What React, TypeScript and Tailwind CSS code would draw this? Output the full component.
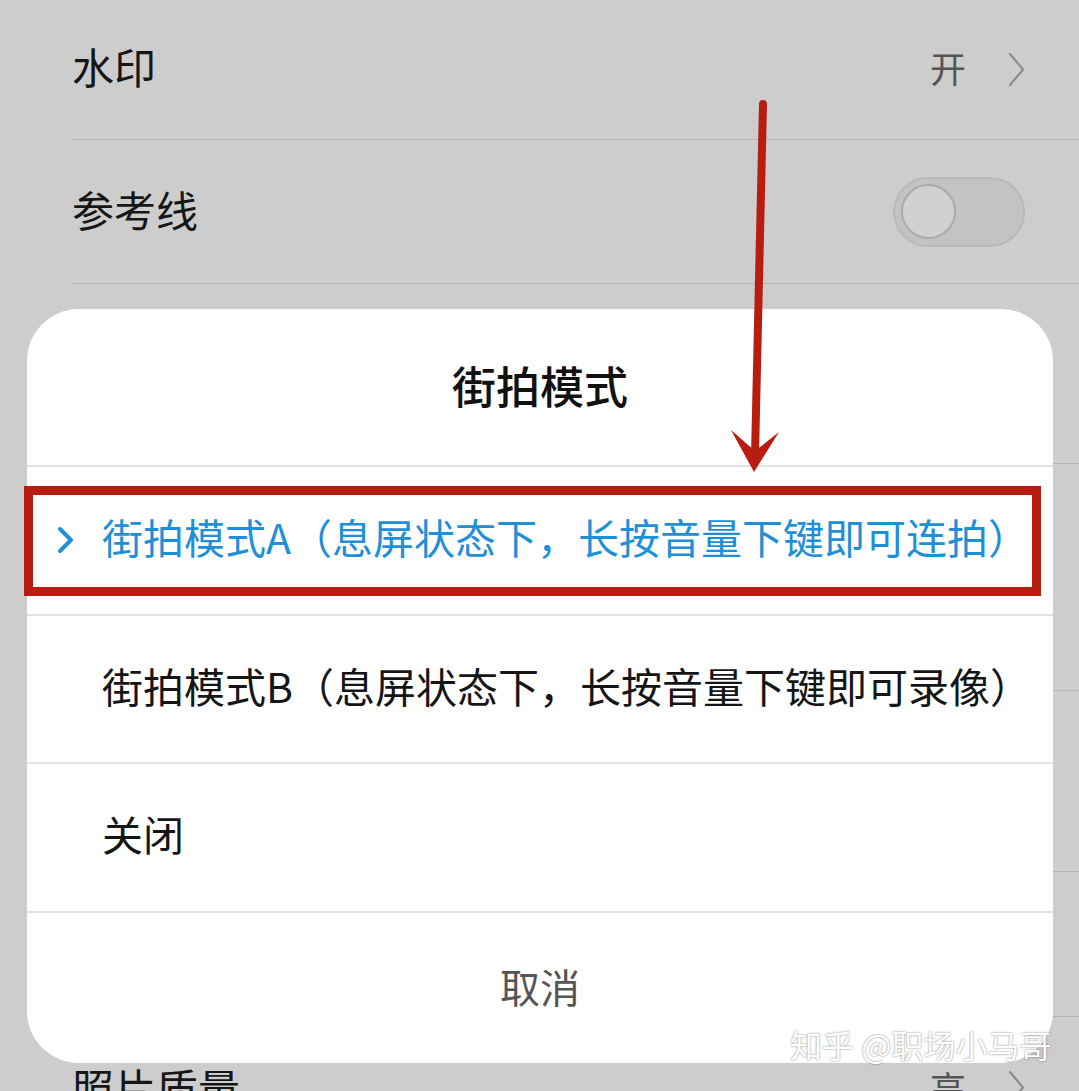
import { ReactNode } from "react";

const font = "font-['Noto_Sans_CJK_SC','Noto_Sans',sans-serif]";

function Chevron({ className = "" }: { className?: string }) {
  return (
    <svg width="17" height="33" viewBox="0 0 17 33" className={className}>
      <polyline
        points="2,1 15,16.5 2,32"
        fill="none"
        stroke="#8c8c8c"
        strokeWidth="2.2"
        strokeLinecap="round"
        strokeLinejoin="round"
      />
    </svg>
  );
}

function BgRow({ h, children }: { h: string; children?: ReactNode }) {
  return (
    <div
      className={`ml-[72px] ${h} border-b border-[#b6b6b6] flex items-center justify-between pr-[54px]`}
    >
      {children}
    </div>
  );
}

function Toggle() {
  return (
    <div className="w-[132px] h-[70px] rounded-full bg-[#c3c3c3] border-2 border-[#b9b9b9] flex items-center pl-[6px]">
      <div className="w-[55px] h-[55px] rounded-full bg-[#d1d1d1] border-2 border-[#ababab]" />
    </div>
  );
}

function Option({
  label,
  active,
}: {
  label: string;
  active?: boolean;
}) {
  return (
    <div className="flex-1 border-t-2 border-[#e3e3e3] flex items-center pl-[30px]">
      <div className="w-[17px] flex items-center">
        {active && (
          <svg width="17" height="28" viewBox="0 0 17 28">
            <polyline
              points="3,3 14,14 3,25"
              fill="none"
              stroke="#1f8fd8"
              strokeWidth="4"
              strokeLinecap="round"
              strokeLinejoin="round"
            />
          </svg>
        )}
      </div>
      <span
        className={`ml-[28px] pb-[7px] text-[41px] leading-none ${
          active ? "text-[#1f8fd8]" : "text-[#151515]"
        }`}
      >
        {label}
      </span>
    </div>
  );
}

export default function App() {
  return (
    <div
      className={`relative w-[1079px] h-[1091px] overflow-hidden bg-[#cdcdcd] ${font}`}
    >
      {/* settings list behind the sheet */}
      <div className="flex flex-col">
        <BgRow h="h-[140px]">
          <span className="pb-[7px] text-[42px] leading-none text-[#161616]">水印</span>
          <div className="flex items-center gap-[42px]">
            <span className="pb-[5px] text-[36px] leading-none text-[#555]">开</span>
            <Chevron />
          </div>
        </BgRow>
        <BgRow h="h-[144px]">
          <span className="pb-[5px] text-[42px] leading-none text-[#161616]">参考线</span>
          <Toggle />
        </BgRow>
        <BgRow h="h-[180px]" />
        <BgRow h="h-[227px]" />
        <BgRow h="h-[181px]" />
        <BgRow h="h-[145px]" />
        <div className="ml-[72px] h-[140px] flex items-center justify-between pr-[54px]">
          <span className="text-[42px] leading-none text-[#161616]">照片质量</span>
          <div className="flex items-center gap-[42px]">
            <span className="text-[36px] leading-none text-[#555]">高</span>
            <Chevron />
          </div>
        </div>
      </div>

      {/* bottom sheet */}
      <div className="absolute left-[27px] top-[309px] w-[1026px] h-[754px] bg-white rounded-[52px] flex flex-col overflow-hidden">
        <div className="h-[156px] pb-[4px] flex items-center justify-center text-[44px] leading-none font-medium text-[#111]">
          街拍模式
        </div>
        <Option label="街拍模式A（息屏状态下，长按音量下键即可连拍）" active />
        <Option label="街拍模式B（息屏状态下，长按音量下键即可录像）" />
        <Option label="关闭" />
        <div className="flex-1 border-t-2 border-[#e3e3e3] pb-[4px] flex items-center justify-center text-[40px] leading-none text-[#555]">
          取消
        </div>
      </div>

      {/* annotation: red frame */}
      <div className="absolute left-[24px] top-[486px] w-[1017px] h-[110px] border-[9px] border-[#b91c10]" />

      {/* annotation: red arrow */}
      <svg
        className="absolute left-0 top-0 pointer-events-none"
        width="1079"
        height="1091"
        viewBox="0 0 1079 1091"
      >
        <line
          x1="763"
          y1="104"
          x2="755"
          y2="455"
          stroke="#b91c10"
          strokeWidth="8"
          strokeLinecap="round"
        />
        <polygon points="754,472 731,430 755,451 779,432" fill="#b91c10" />
      </svg>

      {/* watermark */}
      <div className="absolute left-[790px] top-[1028px] text-[32px] leading-none text-white [text-shadow:0_0_2px_rgba(0,0,0,0.55)]">
        知乎 @职场小马哥
      </div>
    </div>
  );
}
